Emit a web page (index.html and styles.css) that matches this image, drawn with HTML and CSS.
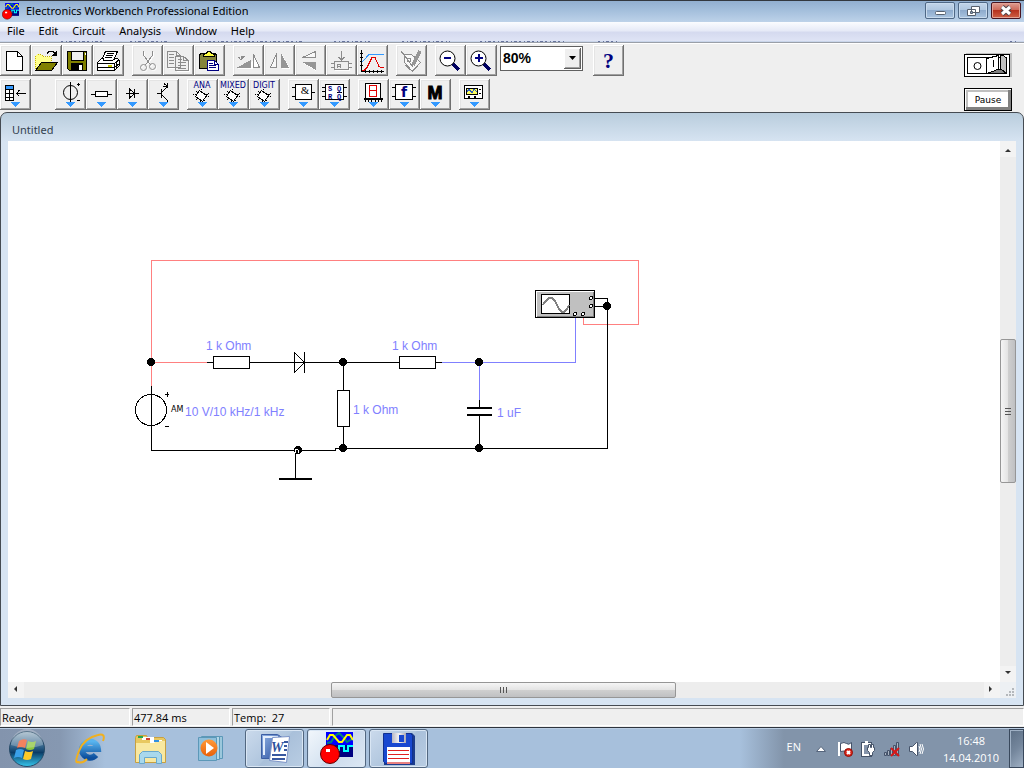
FILE: index.html
```html
<!DOCTYPE html>
<html lang="en">
<head>
<meta charset="utf-8">
<title>Electronics Workbench Professional Edition</title>
<link rel="stylesheet" href="styles.css">
</head>
<body>
<svg class="defs" aria-hidden="true">
  <defs>
    <linearGradient id="orb" x1="0" y1="0" x2="0" y2="1"><stop offset="0" stop-color="#9fb6c6"/><stop offset=".45" stop-color="#2e6088"/><stop offset=".6" stop-color="#0b3c66"/><stop offset="1" stop-color="#35c7ee"/></linearGradient>
    <linearGradient id="ie" x1="0" y1="0" x2="0" y2="1"><stop offset="0" stop-color="#58b4ee"/><stop offset="1" stop-color="#0c4f9e"/></linearGradient>
    <linearGradient id="orange" x1="0" y1="0" x2="0" y2="1"><stop offset="0" stop-color="#ff9a3a"/><stop offset="1" stop-color="#e8610a"/></linearGradient>
    <linearGradient id="word" x1="0" y1="0" x2="1" y2="1"><stop offset="0" stop-color="#8fb0e2"/><stop offset="1" stop-color="#234a9c"/></linearGradient>
    <linearGradient id="metal" x1="0" y1="0" x2="1" y2="0"><stop offset="0" stop-color="#b8b8c4"/><stop offset=".5" stop-color="#f4f4f4"/><stop offset="1" stop-color="#a8a8b4"/></linearGradient>
    <symbol id="ewb" viewBox="0 0 33 33">
      <path fill="#0000ff" d="M6 0h27v13h-27z"/><path fill="#000080" d="M6 13h27v12h-27z"/>
      <path fill="none" stroke="#008080" stroke-width="2" d="M7 11l4-1 4-6 4-3 4 4 4 5 5-3"/>
      <path fill="none" stroke="#ffff00" stroke-width="2" d="M7 8l3-5h3l6 7h3l5-7h3l3 5"/>
      <path fill="none" stroke="#00ffff" stroke-width="2" d="M15 18h4v-4h5v5h4v-5h5"/>
      <circle cx="10" cy="22" r="9.500" fill="#ff0000" stroke="#600000"/><path fill="#fff" d="M6 17h4v3h-4z"/>
    </symbol>
    <symbol id="chip" viewBox="0 0 31 31">
      <path fill="#fff" stroke="#000" d="M12.500 11.500l7 5-4 6-7-5z"/>
      <path fill="none" stroke="#000" stroke-dasharray="1 1" d="M9 12l2 2M6 15l3 1M15 10l-1 3M22 14l-3 2M22 18l-3-1M9 21l2-2M13 23l1-2M18 22l-2-1"/>
    </symbol>
    <symbol id="more" viewBox="0 0 31 31"><path fill="#3399ff" d="M10 23h10l-5 5z"/></symbol>
  </defs>
</svg>

<header class="titlebar">
  <svg class="app-icon" width="17" height="17"><use href="#ewb"/></svg>
  <h1 class="app-title">Electronics Workbench Professional Edition</h1>
  <div class="caption-buttons">
    <button class="cap" aria-label="Minimize"><svg width="28" height="15"><rect x="9.500" y="8.500" width="10" height="3" rx="1" fill="#fff" stroke="#56606e"/></svg></button>
    <button class="cap" aria-label="Restore"><svg width="28" height="15"><path fill="#fff" stroke="#56606e" d="M12.500 3.500h8v6h-8z M8.500 6.500h8v6h-8z"/><path fill="#8aa5c4" stroke="#56606e" d="M11.500 8.500h2v2h-2z"/></svg></button>
    <button class="cap cap-close" aria-label="Close"><svg width="28" height="15"><path fill="none" stroke="#4d4248" stroke-width="5" d="M10 4l8 7M18 4l-8 7"/><path fill="none" stroke="#fff" stroke-width="3" d="M10 4l8 7M18 4l-8 7"/></svg></button>
  </div>
</header>

<nav class="menubar">
  <button class="menu">File</button><button class="menu">Edit</button><button class="menu">Circuit</button><button class="menu">Analysis</button><button class="menu">Window</button><button class="menu">Help</button>
</nav>
<div class="edge"><svg width="1024" height="3"><path fill="none" stroke="#66739c" stroke-dasharray="2 3 1 2 3 2" d="M61 .5h41M130 .5h38M200 .5h104M334 .5h36M402 .5h48M480 .5h86M598 .5h20M1010 .5h8"/></svg></div>

<section class="toolbar">
  <div class="tool-rows">
    <div class="tool-row">
      <div class="group">
        <button class="tool" aria-label="New"><svg viewBox="0 0 31 31"><path fill="#fff" stroke="#000" d="M6.500 6.500h11l5 5v14h-16z"/><path fill="none" stroke="#000" d="M17.500 6.500v5h5"/></svg></button>
        <button class="tool" aria-label="Open"><svg viewBox="0 0 31 31"><path fill="#ffff8c" d="M4 25V11l2-2h4l2 3h8v5h-10z"/><path fill="none" stroke="#c8b400" stroke-dasharray="1 1" d="M4.500 24V11.500l2-2h4l2 2h8v4"/><path fill="#808000" stroke="#000" d="M4.500 25.500l6-8h16l-6 8z"/><path fill="none" stroke="#000" d="M16 8.500l2-2h4l3 3"/><path d="M26 5v6h-6z"/></svg></button>
        <button class="tool" aria-label="Save"><svg viewBox="0 0 31 31"><path fill="#808000" stroke="#000" d="M5.500 6.500h19v19h-17l-2-2z"/><path fill="#efefef" stroke="#000" d="M9.500 6.500h12v9h-12z"/><path d="M9 18h12v8h-12z"/><path fill="#fff" d="M17 20h3v5h-3zM23 8h1v2h-1z"/></svg></button>
        <button class="tool" aria-label="Print"><svg viewBox="0 0 31 31"><path fill="#fff" stroke="#000" d="M8.500 15.500l4-9h12l-4 9z"/><path fill="none" stroke="#000" d="M14 8.500h7M13 10.500h7M12 12.500h7"/><path fill="#fff" stroke="#000" d="M4.500 17.500l4-4h2v2h9l3-2h2l2 2v5l-5 5h-17z"/><path fill="none" stroke="#000" d="M4.500 18.500h17l5-4M21.500 18.500v7M4.500 22.500h17l5-4M23.500 17v6"/><path stroke="#c8c800" stroke-width="2" d="M15 20.500h4"/></svg></button>
      </div>
      <div class="group">
        <button class="tool" aria-label="Cut"><svg viewBox="0 0 31 31"><g fill="none" stroke="#fff" transform="translate(1 1)"><path d="M11.500 6v4l7 10M20.500 6v4l-7 10"/><circle cx="11.500" cy="22.500" r="3"/><circle cx="20.500" cy="21.500" r="3"/></g><g fill="none" stroke="#8c8c8c"><path d="M11.500 6v4l7 10M20.500 6v4l-7 10"/><circle cx="11.500" cy="22.500" r="3"/><circle cx="20.500" cy="21.500" r="3"/></g></svg></button>
        <button class="tool" aria-label="Copy"><svg viewBox="0 0 31 31"><path fill="none" stroke="#fff" d="M5.500 23.500h7M13.500 26.500h13v-11"/><path fill="#efefef" stroke="#8c8c8c" d="M4.500 6.500h9l4 4v12h-13zM12.500 11.500h8l5 4v10h-13z"/><path fill="none" stroke="#8c8c8c" d="M6 9.500h5M6 12.500h5M6 15.500h5M6 18.500h5M15 14.500h4M15 17.500h8M15 20.500h8M15 23.500h8M20.500 11.500v4h5M13.500 6.500v4h4"/></svg></button>
        <button class="tool" aria-label="Paste"><svg viewBox="0 0 31 31"><path fill="#84843c" stroke="#000" d="M5.500 9.500l2-1h13l2 1v14h-17z"/><path fill="#ffff40" stroke="#000" d="M9.500 11.500v-2l3-1 1-2h3l1 2 3 1v2z"/><path fill="#fff" stroke="#000080" d="M13.500 15.500h7l4 4v6h-11z"/><path fill="none" stroke="#000080" d="M15 18.500h4M15 20.500h7M15 22.500h7M20.500 15.500v4h4"/></svg></button>
      </div>
      <div class="group">
        <button class="tool" aria-label="Rotate"><svg viewBox="0 0 31 31"><path fill="#fff" d="M4 24l16-8v8z"/><path fill="#969696" d="M3 23l15-8v8z"/><path fill="#fff" stroke="#8c8c8c" d="M20.500 9.500v13h6z"/><path fill="none" stroke="#8c8c8c" d="M12 11.500h-4v3M5.500 12l2.500 3 2.500-3"/></svg></button>
        <button class="tool" aria-label="Flip horizontal"><svg viewBox="0 0 31 31"><path fill="#f8f8f8" stroke="#8c8c8c" d="M12.500 8.500v14h-6z"/><path fill="#fff" d="M18 9v15h8z"/><path fill="#969696" d="M17 8v15h8z"/></svg></button>
        <button class="tool" aria-label="Flip vertical"><svg viewBox="0 0 31 31"><path fill="#f8f8f8" stroke="#8c8c8c" d="M7.500 12.500h13v-6z"/><path fill="#fff" d="M8 18h13v8z"/><path fill="#969696" d="M7 17h14v8z"/></svg></button>
        <button class="tool" aria-label="Component properties"><svg viewBox="0 0 31 31"><path fill="none" stroke="#fff" d="M9 25.500h14.500v-8"/><path fill="#efefef" stroke="#8c8c8c" d="M8.500 16.500h14v8h-14z"/><path fill="none" stroke="#8c8c8c" d="M15.500 6v9M12.500 12l3 3 3-3M5 18.500h3M5 22.500h3M23 18.500h3M23 22.500h3M11.500 23v-3l1-1h1l1 1v3M12 21.500h3"/></svg></button>
        <button class="tool" aria-label="Display graphs"><svg viewBox="0 0 31 31"><path fill="none" stroke="#000" d="M4.500 5v21.500h22M3 8.500h3M3 12.500h3M3 16.500h3M3 20.500h3M8.500 25v3M12.500 25v3M16.500 25v3M20.500 25v3M24.500 25v3"/><path fill="none" stroke="#3399ff" d="M5 17l7-7.500h15"/><path fill="none" stroke="#e00000" d="M5 25.500h2l3-3 5-10h3l4 9 2 1h3"/></svg></button>
      </div>
      <div class="group">
        <button class="tool" aria-label="Create subcircuit"><svg viewBox="0 0 31 31"><path fill="#f8f8f8" stroke="#8c8c8c" d="M8.500 9.500h7l9 8-8 9-8-9z"/><path fill="none" stroke="#8c8c8c" d="M5 6l12 16M9 20l7 6 8-8M11 13h3v3h-3z"/><path fill="none" stroke="#969696" stroke-width="4" d="M24 6l-7 14"/></svg></button>
      </div>
      <div class="group">
        <button class="tool" aria-label="Zoom out"><svg viewBox="0 0 31 31"><path stroke="#000060" stroke-width="3" d="M18 19l6 6"/><circle cx="12.500" cy="13.500" r="7.500" fill="#fff" stroke="#000"/><path stroke="#000080" stroke-width="2" d="M9 13h7"/></svg></button>
        <button class="tool" aria-label="Zoom in"><svg viewBox="0 0 31 31"><path stroke="#000060" stroke-width="3" d="M18 19l6 6"/><circle cx="12.500" cy="13.500" r="7.500" fill="#fff" stroke="#000"/><path stroke="#000080" stroke-width="2" d="M9 13h8M13 9v8"/></svg></button>
      </div>
      <label class="zoom"><select class="zoom-select" aria-label="Zoom level"><option>80%</option><option>100%</option></select><span class="zoom-arrow"><svg width="15" height="17"><path d="M4 7h7l-3.500 4z"/></svg></span></label>
      <button class="tool tool-help" aria-label="Help">?</button>
    </div>
    <div class="tool-row">
      <div class="group group-first">
        <button class="tool" aria-label="Favorites"><svg viewBox="0 0 31 31"><path fill="#fff" stroke="#000" d="M5.500 6.500h8v15h-8z"/><path fill="#3399ff" d="M6 7h7v3h-7z"/><path fill="none" stroke="#000" d="M5.500 10.500h8M5.500 14.500h8M5.500 18.500h8M9.500 10v12M16 14.500h10M19.500 11l-3 3.500 3 3"/><use href="#more"/></svg></button>
      </div>
      <div class="group">
        <button class="tool" aria-label="Sources"><svg viewBox="0 0 31 31"><circle cx="15.500" cy="13.500" r="7" fill="none" stroke="#000"/><path fill="none" stroke="#000" d="M15.500 3v20M22 5.500h3M23.500 4v3M22 21.500h3"/><use href="#more"/></svg></button>
        <button class="tool" aria-label="Basic"><svg viewBox="0 0 31 31"><path fill="#fff" stroke="#000" d="M9.500 12.500h12v5h-12z"/><path stroke="#000" d="M5 15.500h4M22 15.500h4"/><use href="#more"/></svg></button>
        <button class="tool" aria-label="Diodes"><svg viewBox="0 0 31 31"><path fill="none" stroke="#000" d="M9 14.500h13M12.500 10v9l5-4.500zM17.500 10v9"/><use href="#more"/></svg></button>
        <button class="tool" aria-label="Transistors"><svg viewBox="0 0 31 31"><path fill="none" stroke="#000" d="M9 14.500h4M13.500 10v9M14 13l4-4V6M14 16l5 5v2M15 7.500h4M16 4.500l4 3M19.500 4v5"/><use href="#more"/></svg></button>
      </div>
      <div class="group">
        <button class="tool" aria-label="Analog ICs"><svg viewBox="0 0 31 31"><text class="ic-label" x="15" y="9">ANA</text><use href="#chip"/><use href="#more"/></svg></button>
        <button class="tool" aria-label="Mixed ICs"><svg viewBox="0 0 31 31"><text class="ic-label" x="15" y="9">MIXED</text><use href="#chip"/><use href="#more"/></svg></button>
        <button class="tool" aria-label="Digital ICs"><svg viewBox="0 0 31 31"><text class="ic-label" x="15" y="9">DIGIT</text><use href="#chip"/><use href="#more"/></svg></button>
      </div>
      <div class="group">
        <button class="tool" aria-label="Logic gates"><svg viewBox="0 0 31 31"><path fill="#fff" stroke="#000" d="M7.500 5.500h16v15h-16z"/><path stroke="#000" d="M4 8.500h4M4 17.500h4M24 13.500h3"/><text class="ic-amp" x="17" y="15">&amp;</text><use href="#more"/></svg></button>
        <button class="tool" aria-label="Digital"><svg viewBox="0 0 31 31"><path fill="#fff" stroke="#000" d="M6.500 5.500h18v15h-18z"/><path stroke="#000" d="M3 8.500h3M3 12.500h3M3 17.500h3M25 8.500h3M25 17.500h3M18 13.500h5"/><text class="ic-sr" x="11" y="12">S</text><text class="ic-sr" x="20" y="12">Q</text><text class="ic-sr" x="11" y="20">R</text><text class="ic-sr" x="20" y="20">Q</text><use href="#more"/></svg></button>
      </div>
      <div class="group">
        <button class="tool" aria-label="Indicators"><svg viewBox="0 0 31 31"><path fill="#fff" stroke="#000" d="M7.500 4.500h15v15h-15z"/><path fill="none" stroke="#e00000" d="M11.500 6.500h7v11h-7zM11.500 11.500h7"/><path stroke="#000" stroke-width="2" d="M6 20h19"/><path fill="none" stroke="#000" d="M7.500 20v3M10.500 20v3M13.500 20v3M17.500 20v3M20.500 20v3M23.500 20v3"/><use href="#more"/></svg></button>
        <button class="tool" aria-label="Controls"><svg viewBox="0 0 31 31"><path fill="#fff" stroke="#000" d="M6.500 5.500h17v15h-17z"/><path stroke="#000" d="M3 8.500h3M3 17.500h3M24 8.500h3M24 17.500h3"/><text class="ic-f" x="15" y="18">f</text><use href="#more"/></svg></button>
        <button class="tool" aria-label="Miscellaneous"><svg viewBox="0 0 31 31"><text class="ic-m" x="15" y="20">M</text><use href="#more"/></svg></button>
      </div>
      <div class="group">
        <button class="tool" aria-label="Instruments"><svg viewBox="0 0 31 31"><path fill="#fff" stroke="#000" d="M5.500 6.500h18v13h-18z"/><path fill="#ffff60" stroke="#000" d="M7.500 9.500h11v6h-11z"/><path fill="none" stroke="#3060c0" d="M8 12.500l2-2 3 3 2-3 3 2"/><path d="M20 10h2v1h-2zM20 14h2v1h-2zM9 17h2v2h-2zM15 17h2v2h-2z"/><use href="#more"/></svg></button>
      </div>
    </div>
  </div>
  <div class="run-controls">
    <button class="power" aria-label="Activate simulation"><svg width="48" height="25"><path fill="#c0c0c0" d="M2 0h46v24h-46z"/><path fill="#fff" stroke="#000" d="M.5 1.500h45v22h-45z"/><path fill="#fff" stroke="#000" d="M3.500 4.500h39v16h-39z"/><circle cx="13.500" cy="13" r="3.500" fill="none" stroke="#000"/><path fill="#fff" stroke="#000" d="M22.500 5.500l12-3v14l-12 4z"/><path fill="#c0c0c0" stroke="#000" d="M36.500 2.500h3l3 3v15l-6-4z"/><path fill="#808080" stroke="#000" d="M23.500 20.500l10-4h4l5 4z"/><path stroke="#000" d="M29.500 7v7"/></svg></button>
    <button class="pause">Pause</button>
  </div>
</section>

<main class="mdi">
  <h2 class="doc-title">Untitled</h2>
  <div class="doc">
    <div class="canvas">
      <svg class="circuit" width="650" height="360" viewBox="8 141 650 360" role="img" aria-label="Circuit diagram">
        <path fill="none" stroke="#ff8080" d="M151.500 386V260.500h487v64h-55v-8M151 362.500h56"/>
        <path fill="none" stroke="#8080ff" d="M442 362.500h133.500V316M479.500 362v38"/>
        <g fill="none" stroke="#000">
          <path d="M151.500 386v64.500h184v-2h272V298.500H595M595 306.500h12M207 362.500h6M250 362.500h149M436 362.500h6M343.500 362v28M343.500 427v22M479.500 400v8M479.500 415v33M295.500 451v28"/>
          <path d="M213.500 356.500h36v12h-36zM399.500 356.500h36v12h-36zM337.500 390.500h12v36h-12z"/>
          <circle cx="151" cy="410" r="15.500"/>
          <path d="M294.500 352v21M304.500 352v21M294.500 352.500l10 10-10 10M165 394.500h4M167 392v5M165 426.500h4"/>
          <path stroke-width="2" d="M279 479h33M467 408h25M467 415h25"/>
        </g>
        <g><circle cx="151" cy="362" r="4"/><circle cx="343" cy="362" r="4"/><circle cx="343" cy="448" r="4"/><circle cx="479" cy="362" r="4"/><circle cx="479" cy="448" r="4"/><circle cx="298" cy="450" r="4"/><circle cx="607" cy="306" r="4"/></g>
        <path fill="none" stroke="#fff" d="M295.500 453v-3.500h2.500M298.500 450v3"/>
        <path fill="#c0c0c0" stroke="#000" d="M535.500 290.500h59v27h-59z"/>
        <path fill="none" stroke="#fff" d="M536.500 317v-25.500h57"/>
        <path fill="none" stroke="#808080" d="M537 316.500h56.500V292"/>
        <path fill="#fff" stroke="#000" d="M541.500 294.500h28v19h-28z"/>
        <path fill="none" stroke="#808080" stroke-width="2" d="M543 305q8-14 14 0t12 0"/>
        <g fill="#fff" stroke="#000"><circle cx="591" cy="298" r="1.500"/><circle cx="591" cy="306" r="1.500"/><circle cx="575" cy="314" r="1.500"/><circle cx="583" cy="314" r="1.500"/></g>
        <g class="part-label">
          <text x="206" y="350">1 k Ohm</text><text x="392" y="350">1 k Ohm</text><text x="353" y="414">1 k Ohm</text><text x="497" y="417">1 uF</text><text x="185" y="416">10 V/10 kHz/1 kHz</text>
        </g>
        <text class="am-label" x="171" y="412">AM</text>
      </svg>
    </div>
    <div class="vscroll">
      <button class="sbtn" aria-label="Scroll up"><svg width="16" height="16"><path fill="#333" d="M5 11h6l-3-3z"/></svg></button>
      <div class="space-before-v"></div>
      <div class="thumb thumb-v"><svg width="8" height="8"><path stroke="#555" d="M1 1.500h6M1 4.500h6M1 7.500h6"/></svg></div>
      <div class="space-after-v"></div>
      <button class="sbtn" aria-label="Scroll down"><svg width="16" height="16"><path fill="#333" d="M5 5h6l-3 3z"/></svg></button>
    </div>
    <div class="hscroll">
      <button class="sbtn" aria-label="Scroll left"><svg width="16" height="16"><path fill="#333" d="M9 4v6l-3-3z"/></svg></button>
      <div class="space-before-h"></div>
      <div class="thumb thumb-h"><svg width="9" height="8"><path stroke="#555" d="M1.500 1v6M4.500 1v6M7.500 1v6"/></svg></div>
      <div class="space-after-h"></div>
      <button class="sbtn" aria-label="Scroll right"><svg width="16" height="16"><path fill="#333" d="M5 4v6l3-3z"/></svg></button>
    </div>
    <div class="grip"><svg width="16" height="16"><path fill="#b4b8bc" d="M12 6h2v2h-2zM12 9h2v2h-2zM12 12h2v2h-2zM9 9h2v2h-2zM9 12h2v2h-2zM6 12h2v2h-2z"/></svg></div>
  </div>
</main>

<footer class="status">
  <div class="panel">Ready</div><div class="panel panel-time">477.84 ms</div><div class="panel panel-time">Temp:&nbsp; 27</div><div class="panel panel-rest"></div>
</footer>

<div class="taskbar">
  <button class="launch launch-start" aria-label="Start"><svg width="40" height="40"><circle cx="20" cy="20" r="17.500" fill="url(#orb)" stroke="#274b68"/><path fill="#f0582a" d="M12 12q4-3 8-1l-2 8q-4-2-8 0z"/><path fill="#8cc63e" d="M21 12q4 2 8 0l-2 8q-4 2-8 0z"/><path fill="#3aa0e8" d="M9 21q4-2 8 0l-2 8q-4-2-8 0z"/><path fill="#fcc928" d="M18 22q4 2 8 0l-2 8q-4 2-8 0z"/><path fill="#fff" opacity=".25" d="M4 16a16 16 0 0 1 32 0q-16 6-32 0z"/></svg></button>
  <button class="launch" aria-label="Internet Explorer"><svg width="40" height="40"><path fill="none" stroke="url(#ie)" stroke-width="6" d="M11 20h17a8 8 0 1 0-2 6"/><path fill="none" stroke="#f0b020" stroke-width="2" d="M33 12q3-8-5-6Q14 9 9 22t-1 11q4 2 9-3"/></svg></button>
  <button class="launch" aria-label="Explorer"><svg width="40" height="40"><path fill="#e8c860" stroke="#c8a040" d="M5.500 8.500l1-2h10l1 2h16l2 2v23h-30z"/><path fill="#fff" d="M12 8h12v3h-12zM20 11h12v3h-12z"/><path fill="#f8e8a0" d="M6 14h18l2-2h9v21h-29z"/><path fill="#24a850" d="M8 7h5v2h-5z"/><path fill="#d04030" d="M16 9h4v2h-4z"/><path fill="#3090e0" d="M24 11h5v2h-5z"/><path fill="#a8d8ec" stroke="#68a8cc" d="M9.500 34.500v-9l3-3h16l3 3v9h-5v-6h-12v6z"/></svg></button>
  <button class="launch" aria-label="Media Player"><svg width="40" height="40"><path fill="#9cc8dc" stroke="#5c98b8" d="M13.500 7.500h19v22h-19z"/><path fill="#b4d8e8" stroke="#5c98b8" d="M11.500 7.500h18v23h-18z"/><path fill="#8fc0dc" stroke="#5c98b8" d="M8.500 8.500h18v23h-18z"/><circle cx="19" cy="19" r="8.500" fill="url(#orange)"/><path fill="#fff" d="M16 13l8 6-8 6z"/></svg></button>
  <button class="task" aria-label="Word"><svg width="40" height="38"><path fill="url(#word)" stroke="#3c5ea4" d="M6.500 4.500h16l6 4v20h-22z"/><path fill="none" stroke="#e4eefc" stroke-width="2" d="M9 25V7h14"/><path fill="#fff" stroke="#7c94c8" d="M17.500 7.500l17-1-3 26-17-2z"/><text class="word-w" x="16" y="22">W</text><path stroke="#3858a0" stroke-width="2" d="M29 12h4M29 16h3M29 20h3M17 25h14M17 29h13"/></svg></button>
  <button class="task task-active" aria-label="Electronics Workbench"><svg width="33" height="33"><use href="#ewb"/></svg></button>
  <button class="task" aria-label="Save Disk"><svg width="33" height="33"><path fill="#1c3c8c" d="M2 1h28l3 3v29h-31z"/><path fill="#1848d0" stroke="#103090" d="M1.500 1.500h27l2 2v28h-27l-2-2z"/><path fill="url(#metal)" d="M10 1h14v10h-14z"/><path fill="#1848d0" d="M17 3h5v7h-5z"/><path fill="#fff" d="M5 15h23v17h-23z"/><path stroke="#e02020" d="M6 18.500h21M6 22.500h21M6 26.500h21"/><path stroke="#e88080" stroke-width="2" d="M5 31h23"/></svg></button>
  <div class="tray">
    <span class="lang">EN</span>
    <button class="tray-icon" aria-label="Show hidden icons"><svg width="20" height="20"><path fill="#fff" stroke="#56657c" d="M5.500 12.500h9l-4.500-5z"/></svg></button>
    <button class="tray-icon" aria-label="Action Center"><svg width="20" height="20"><path stroke="#fff" stroke-width="2" d="M4 3v14"/><path fill="#fff" stroke="#45536a" d="M5.500 4.500q4-2 6 0t5-1v8q-3 2-5 1t-6 0z"/><circle cx="13.500" cy="13.500" r="4" fill="#dc2418" stroke="#901008"/><path stroke="#fff" stroke-width="2" d="M12 12l3 3M15 12l-3 3"/></svg></button>
    <button class="tray-icon" aria-label="Power"><svg width="20" height="20"><path fill="none" stroke="#445268" stroke-width="4" d="M4 5h7v11h-7z"/><path fill="#8594aa" stroke="#fff" stroke-width="2" d="M4 5h7v11h-7z"/><path fill="#fff" d="M6 2h3v2h-3z"/><path fill="#fff" stroke="#445268" d="M8.500 8.500h1v-3h2v3h1v-3h2v3h1v3l-2 2v3h-3v-3l-2-2z"/></svg></button>
    <button class="tray-icon" aria-label="Network"><svg width="20" height="20"><path fill="#aab4c2" stroke="#45536a" d="M1.500 13.500h2v3h-2zM4.500 11.500h2v5h-2zM7.500 9.500h2v7h-2zM10.500 6.500h2v10h-2zM13.500 3.500h2v13h-2z"/><path stroke="#d81818" stroke-width="2" d="M8 9l8 8M16 9l-8 8"/></svg></button>
    <button class="tray-icon" aria-label="Volume"><svg width="20" height="20"><path fill="#fff" stroke="#45536a" d="M2.500 7.500h3l4-4h1v13h-1l-4-4h-3z"/><path fill="none" stroke="#fff" d="M12 7q2 3 0 6M13 5q3 5 0 10M15 5q3 5 0 10"/></svg></button>
    <div class="clock"><span>16:48</span><span>14.04.2010</span></div>
    <button class="show-desktop" aria-label="Show desktop"></button>
  </div>
</div>
</body>
</html>
```
FILE: styles.css
```css
* { box-sizing: border-box; }
html, body { height: 100%; }
body {
  margin: 0;
  display: flex;
  flex-direction: column;
  overflow: hidden;
  background: #efefef;
  color: #000;
  font: 11px/16px "Noto Sans", "Open Sans", sans-serif;
}
button { margin: 0; padding: 0; border: 0; background: none; color: inherit; font: inherit; }
svg { display: block; flex: none; }
.defs { position: absolute; width: 0; height: 0; }

.titlebar {
  display: flex;
  flex: none;
  align-items: center;
  height: 22px;
  padding: 0 3px 0 2px;
  border-top: 1px solid #33383f;
  background: linear-gradient(#92afd0, #a4bfdc 45%, #bdd2e9);
}
.app-title { flex: 1; margin: 0 0 2px 7px; font: inherit; }
.caption-buttons { display: flex; align-self: flex-start; gap: 3px; padding-top: 1px; }
.cap {
  width: 30px;
  height: 17px;
  border: 1px solid #4f6886;
  border-radius: 2px;
  background: linear-gradient(#c3d5e9, #b0c7e0 45%, #8eabcd 50%, #aac5e0);
  box-shadow: inset 0 0 0 1px #c9dbee;
}
.cap-close {
  border-color: #481420;
  background: linear-gradient(#df9d92, #cd6a5a 45%, #b7321f 50%, #cf6046);
  box-shadow: inset 0 0 0 1px #e3a396;
}

.menubar {
  display: flex;
  flex: none;
  gap: 14px;
  height: 19px;
  padding: 1px 7px 2px;
  background: linear-gradient(#fbfcff, #e6eaf7 45%, #d5daef 55%, #dfe4f5);
}
.edge { flex: none; height: 3px; overflow: hidden; background: linear-gradient(#c9d5ea 1px, #9a9fa8 1px 2px, #fff 2px); }

.toolbar { display: flex; flex: none; justify-content: space-between; padding: 1px 12px 1px 0; background: #efefef; }
.tool-rows { display: flex; flex-direction: column; gap: 3px; }
.tool-row { display: flex; gap: 8px; }
.group { display: flex; }
.group-first { margin-right: 16px; }
.tool {
  width: 31px;
  height: 31px;
  background: #efefef;
  box-shadow: inset -1px -1px #707070, inset 1px 1px #fff, inset -2px -2px #a0a0a0, inset 2px 2px #e4e4e4;
}
.tool svg { width: 31px; height: 31px; shape-rendering: crispEdges; }
.tool circle { shape-rendering: auto; }
.tool-help { margin-left: 2px; color: #000080; font: bold 22px/31px "Liberation Serif", serif; }
.ic-label { fill: #000080; font: 8px "DejaVu Sans", sans-serif; text-anchor: middle; }
.ic-amp { fill: #000; font: 11px "Liberation Serif", serif; text-anchor: middle; }
.ic-sr { fill: #000080; font: bold 7px "Liberation Mono", monospace; text-anchor: middle; }
.ic-f { fill: #000080; font: bold 14px "DejaVu Sans", sans-serif; text-anchor: middle; }
.ic-m { fill: #000; stroke: #000; font: bold 18px "Liberation Sans", sans-serif; text-anchor: middle; }
.zoom { display: flex; width: 83px; height: 25px; margin: 1px 0 0 -5px; padding: 1px; border: 1px solid #606060; background: #fff; }
.zoom-select {
  flex: 1;
  min-width: 0;
  height: 20px;
  padding: 0 1px;
  border: 0;
  appearance: none;
  background: #fff;
  color: #000;
  font: bold 14px/20px "Liberation Sans", sans-serif;
}
.zoom-arrow { width: 17px; padding: 1px; background: #efefef; box-shadow: inset -1px -1px #606060, inset 1px 1px #fff, inset -2px -2px #a0a0a0; }
.run-controls { display: flex; flex-direction: column; gap: 10px; padding-top: 8px; }
.power { width: 48px; height: 25px; }
.power svg { shape-rendering: crispEdges; }
.power circle { shape-rendering: auto; }
.pause {
  width: 48px;
  height: 23px;
  border: 1px solid #000;
  background: #fff;
  box-shadow: inset 1px 1px #fff, inset -3px -3px #808080, inset 3px 3px #c0c0c0;
  font: 9px/20px "DejaVu Sans", sans-serif;
}

.mdi {
  display: flex;
  flex: 1;
  flex-direction: column;
  min-height: 0;
  padding: 0 7px 7px;
  border: 1px solid #454b52;
  border-radius: 7px 7px 0 0;
  background: linear-gradient(#b9cddd, #d7e4f2 29px);
}
.doc-title { flex: none; margin: 0; padding: 9px 4px 3px; color: #33414f; font: inherit; }
.doc { display: grid; flex: 1; grid-template: minmax(0, 1fr) 16px / minmax(0, 1fr) 16px; min-height: 0; }
.canvas { overflow: hidden; background: #fff; }
.circuit { shape-rendering: crispEdges; }
.part-label { fill: #8080ff; font: 12px "Liberation Sans", sans-serif; }
.am-label { font: 8px "DejaVu Sans", sans-serif; }
.vscroll, .hscroll { display: flex; background: #ededed; }
.vscroll { flex-direction: column; }
.sbtn { flex: none; width: 16px; height: 16px; background: #f3f3f3; }
.thumb { display: flex; align-items: center; justify-content: center; border: 1px solid #969696; border-radius: 2px; }
.thumb-v { flex: 142; background: linear-gradient(90deg, #f5f5f5, #e4e4e4 48%, #cfcfcf 52%, #bfc0c2); }
.thumb-h { flex: 343; background: linear-gradient(#f5f5f5, #e4e4e4 48%, #cfcfcf 52%, #bfc0c2); }
.space-before-v { flex: 183; }
.space-after-v { flex: 184; }
.space-before-h { flex: 308; }
.space-after-h { flex: 309; }
.grip { background: #edf0f3; }

.status { display: flex; flex: none; gap: 2px; height: 22px; padding: 2px 0 1px; background: #efefef; border-bottom: 1px solid #2d343e; }
.panel { width: 130px; padding-left: 1px; border: 1px solid; border-color: #a0a0a0 #fff #fff #a0a0a0; font: 11px/18px "Open Sans", sans-serif; }
.panel-time { width: 98px; }
.panel-rest { flex: 1; }

.taskbar {
  display: flex;
  flex: none;
  align-items: center;
  height: 40px;
  border-top: 1px solid #b9cce2;
  background: linear-gradient(90deg, #8394ad, #8698b1 60px, #a7c0dc 105px, #a7c0dc calc(100% - 284px), #8294aa calc(100% - 240px));
}
.launch { width: 40px; height: 40px; margin-right: 20px; }
.launch-start { margin: 0 23px 0 7px; }
.launch:nth-child(4) { margin-right: 15px; }
.task {
  display: flex;
  align-items: center;
  justify-content: center;
  width: 59px;
  height: 39px;
  margin-right: 3px;
  border: 1px solid #526780;
  border-radius: 3px;
  background: linear-gradient(135deg, #cbdaec, #b0c6de 50%, #a9c0da 52%, #b9cde3);
  box-shadow: inset 0 0 0 1px #d9e6f4;
}
.task-active { background: linear-gradient(135deg, #f2f7fc, #d6e3f1 50%, #cbdaec 52%, #dce8f4); }
.word-w { fill: #2c509c; font: italic bold 14px "Liberation Serif", serif; }
.tray { display: flex; align-items: center; align-self: stretch; margin-left: auto; color: #fff; }
.lang { margin: 0 10px 5px 0; }
.lang, .clock { font: 11px/17px "Open Sans", sans-serif; }
.tray-icon { width: 20px; height: 20px; margin-right: 4px; }
.clock { display: flex; flex-direction: column; align-items: center; width: 70px; margin-left: 5px; }
.show-desktop { align-self: stretch; width: 15px; margin-left: 3px; border: 1px solid #39485c; background: linear-gradient(135deg, #5c6e84, #74869c 50%, #9fb0c4); box-shadow: inset 1px 1px #9fb0c4; }
```
